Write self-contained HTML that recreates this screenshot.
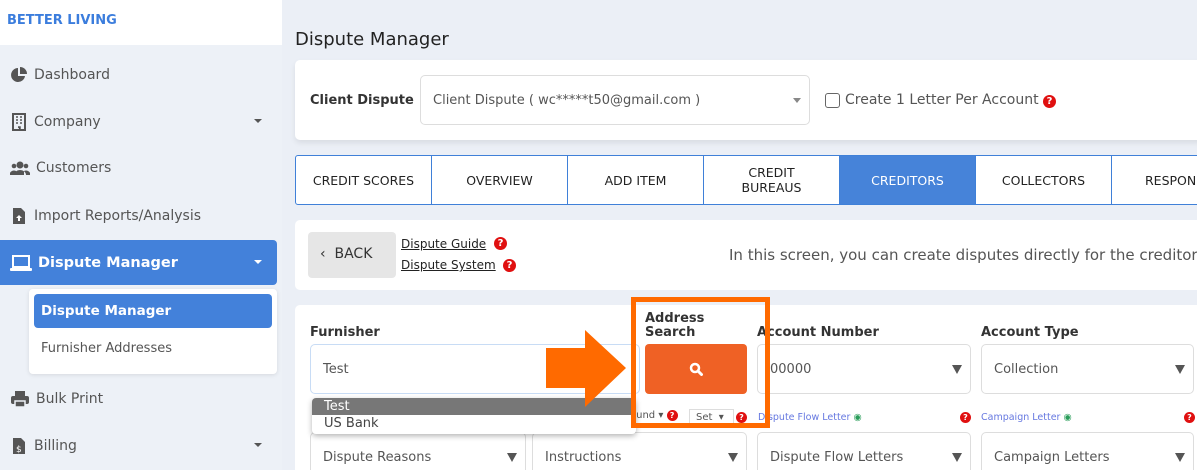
<!DOCTYPE html>
<html style="overflow:hidden;width:1197px;height:470px"><head><meta charset="utf-8"><style>
*{box-sizing:border-box;margin:0;padding:0}
body{width:1197px;height:470px;overflow:hidden;background:#ebeff6;font-family:"DejaVu Sans","Liberation Sans",sans-serif;color:#444;position:relative}
.a{position:absolute}
.side{left:0;top:0;width:282px;height:470px;background:#edf1f7}
.logo{left:0;top:0;width:282px;height:45px;background:#fff;color:#3b7ddd;font-weight:bold;font-size:13px;padding:13px 7px}
.nav{left:10px;font-size:14px;color:#555;display:flex;align-items:center}
.nav svg{margin-right:6px}
.car{width:0;height:0;border-left:4px solid transparent;border-right:4px solid transparent;border-top:4px solid #555}
.card{background:#fff;border-radius:5px}
.box{border:1px solid #ddd;border-radius:5px;background:#fff;font-size:13px;color:#555;display:flex;align-items:center;padding-left:12px}
.tri{position:absolute;right:8px;top:50%;margin-top:-4px;width:0;height:0;border-left:5px solid transparent;border-right:5px solid transparent;border-top:9px solid #555}
.lbl{font-size:13px;font-weight:bold;color:#333}
.q{display:inline-block;width:13px;height:13px;border-radius:50%;background:#e01010;color:#fff;font-size:10px;font-weight:bold;text-align:center;line-height:13px}
.tab{top:155px;height:50px;border:1px solid #3f80d8;border-left:none;background:#fff;font-size:12.5px;color:#222;display:flex;align-items:center;justify-content:center;text-align:center;line-height:15px}
</style></head><body>
<div class="a side"></div>
<div class="a logo">BETTER LIVING</div>
<div class="a nav" style="top:66px"><svg width="18" height="18" viewBox="0 0 18 18"><path d="M8 2a7 7 0 1 0 7 8H8z" fill="#555"/><path d="M10 1v7h7a7 7 0 0 0-7-7z" fill="#555"/></svg>Dashboard</div>
<div class="a nav" style="top:113px"><svg width="18" height="18" viewBox="0 0 18 18"><rect x="3" y="1" width="12" height="16" fill="none" stroke="#555" stroke-width="2"/><path d="M6 4h2M10 4h2M6 7h2M10 7h2M6 10h2M10 10h2M8 14h2v3" stroke="#555" stroke-width="1.5"/></svg>Company</div>
<div class="a car" style="left:254px;top:119px"></div>
<div class="a nav" style="top:160px"><svg width="20" height="16" viewBox="0 0 20 16"><circle cx="10" cy="5" r="3.5" fill="#555"/><circle cx="4" cy="6" r="2.3" fill="#555"/><circle cx="16" cy="6" r="2.3" fill="#555"/><path d="M4 15a6 5 0 0 1 12 0z M0 14a4 3 0 0 1 6-3v4H0z M20 14a4 3 0 0 0-6-3v4h6z" fill="#555"/></svg>Customers</div>
<div class="a nav" style="top:207px"><svg width="18" height="18" viewBox="0 0 18 18"><path d="M3 1h8l4 4v12H3z" fill="#555"/><path d="M9 8l-3 3h2v3h2v-3h2z" fill="#fff"/></svg>Import Reports/Analysis</div>
<div class="a" style="left:0;top:240px;width:277px;height:45px;background:#4381da;border-radius:0 4px 4px 0"></div>
<div class="a nav" style="top:254px;color:#fff;font-size:14.5px;font-weight:bold"><svg width="22" height="18" viewBox="0 0 22 18"><rect x="3" y="2" width="16" height="11" fill="none" stroke="#fff" stroke-width="2"/><rect x="0" y="14" width="22" height="3" rx="1" fill="#fff"/></svg>Dispute Manager</div>
<div class="a car" style="left:254px;top:260px;border-top-color:#fff"></div>
<div class="a" style="left:29px;top:289px;width:248px;height:85px;background:#fff;border-radius:4px;box-shadow:0 1px 4px rgba(0,0,0,.1)"></div>
<div class="a" style="left:34px;top:294px;width:238px;height:34px;background:#4381da;border-radius:4px;color:#fff;font-weight:bold;font-size:13.5px;padding:9px 7px">Dispute Manager</div>
<div class="a" style="left:41px;top:341px;font-size:13px;color:#555">Furnisher Addresses</div>
<div class="a nav" style="top:390px"><svg width="20" height="18" viewBox="0 0 20 18"><rect x="5" y="1" width="10" height="5" fill="#555"/><rect x="1" y="6" width="18" height="8" rx="2" fill="#555"/><rect x="5" y="11" width="10" height="6" fill="#555" stroke="#edf1f7" stroke-width="1.5"/></svg>Bulk Print</div>
<div class="a nav" style="top:437px"><svg width="18" height="18" viewBox="0 0 18 18"><path d="M3 1h8l4 4v12H3z" fill="#555"/><text x="6" y="15" font-size="9" fill="#fff" font-family="DejaVu Sans">$</text></svg>Billing</div>
<div class="a car" style="left:254px;top:443px"></div>

<div class="a" style="left:295px;top:29px;font-size:18px;color:#222">Dispute Manager</div>
<div class="a card" style="left:295px;top:60px;width:910px;height:80px;box-shadow:0 3px 6px rgba(0,0,0,.08)"></div>
<div class="a lbl" style="left:310px;top:93px">Client Dispute</div>
<div class="a box" style="left:420px;top:75px;width:390px;height:50px">Client Dispute ( wc*****t50@gmail.com )<div class="tri" style="border-top-width:5px;border-top-color:#888;border-left-width:4px;border-right-width:4px;margin-top:-2px"></div></div>
<div class="a" style="left:825px;top:93px;width:15px;height:15px;border:1px solid #666;border-radius:3px;background:#fff"></div>
<div class="a" style="left:845px;top:92px;font-size:14px;color:#555">Create 1 Letter Per Account <span class="q">?</span></div>

<div class="a tab" style="left:295px;width:137px;border-left:1px solid #3f80d8;border-radius:3px 0 0 3px">CREDIT SCORES</div>
<div class="a tab" style="left:432px;width:136px">OVERVIEW</div>
<div class="a tab" style="left:568px;width:136px">ADD ITEM</div>
<div class="a tab" style="left:704px;width:136px">CREDIT<br>BUREAUS</div>
<div class="a tab" style="left:840px;width:136px;background:#4683d9;color:#fff">CREDITORS</div>
<div class="a tab" style="left:976px;width:136px">COLLECTORS</div>
<div class="a tab" style="left:1112px;width:136px;justify-content:flex-start;padding-left:33px">RESPONSES</div>

<div class="a card" style="left:295px;top:220px;width:910px;height:70px"></div>
<div class="a" style="left:308px;top:232px;width:88px;height:46px;background:#e6e6e6;border-radius:4px;font-size:14px;color:#333;padding:14px 12px">&#8249;&nbsp; BACK</div>
<div class="a" style="left:401px;top:237px;font-size:12px;color:#222;text-decoration:underline">Dispute Guide</div><div class="a q" style="left:494px;top:237px">?</div>
<div class="a" style="left:401px;top:258px;font-size:12px;color:#222;text-decoration:underline">Dispute System</div><div class="a q" style="left:503px;top:259px">?</div>
<div class="a" style="left:729px;top:246px;font-size:15px;color:#555;white-space:nowrap">In this screen, you can create disputes directly for the creditors</div>

<div class="a card" style="left:295px;top:305px;width:910px;height:170px"></div>
<div class="a lbl" style="left:310px;top:325px">Furnisher</div>
<div class="a lbl" style="left:645px;top:312px;line-height:14px">Address<br>Search</div>
<div class="a lbl" style="left:757px;top:325px">Account Number</div>
<div class="a lbl" style="left:981px;top:325px">Account Type</div>
<div class="a box" style="left:310px;top:344px;width:330px;height:50px;border-color:#c8dcf5">Test</div>
<div class="a" style="left:645px;top:344px;width:102px;height:50px;background:#ef6125;border-radius:4px"><svg class="a" style="left:44px;top:18px" width="14" height="14" viewBox="0 0 14 14"><circle cx="6" cy="6" r="4" fill="none" stroke="#fff" stroke-width="2.5"/><path d="M9 9l3.5 3.5" stroke="#fff" stroke-width="3" stroke-linecap="round"/></svg></div>
<div class="a box" style="left:757px;top:344px;width:214px;height:50px">00000<div class="tri"></div></div>
<div class="a box" style="left:981px;top:344px;width:213px;height:50px">Collection<div class="tri"></div></div>

<div class="a" style="left:630px;top:410px;font-size:10px;color:#555">ound ▾ <span class="q" style="width:11px;height:11px;line-height:11px;font-size:8px">?</span></div>
<div class="a" style="left:689px;top:409px;width:45px;height:17px;border:1px solid #ddd;font-size:10px;padding:2px 6px;color:#555">Set &nbsp;▾</div>
<div class="a q" style="left:736px;top:412px;width:11px;height:11px;line-height:11px;font-size:8px">?</div>
<div class="a" style="left:758px;top:412px;font-size:9.5px;color:#6678e0">Dispute Flow Letter <span style="color:#2a9d5a">◉</span></div>
<div class="a q" style="left:960px;top:412px;width:11px;height:11px;line-height:11px;font-size:8px">?</div>
<div class="a" style="left:981px;top:412px;font-size:9.5px;color:#6678e0">Campaign Letter <span style="color:#2a9d5a">◉</span></div>
<div class="a q" style="left:1184px;top:412px;width:11px;height:11px;line-height:11px;font-size:8px">?</div>

<div class="a box" style="left:310px;top:432px;width:216px;height:50px">Dispute Reasons<div class="tri" style="top:24px"></div></div>
<div class="a box" style="left:532px;top:432px;width:215px;height:50px">Instructions<div class="tri" style="top:24px"></div></div>
<div class="a box" style="left:757px;top:432px;width:214px;height:50px">Dispute Flow Letters<div class="tri" style="top:24px"></div></div>
<div class="a box" style="left:981px;top:432px;width:213px;height:50px">Campaign Letters<div class="tri" style="top:24px"></div></div>

<div class="a" style="left:312px;top:398px;width:324px;height:36px;background:#fff;border-radius:4px;box-shadow:0 2px 6px rgba(0,0,0,.3);overflow:hidden;font-size:13px">
<div style="background:#777;color:#fff;height:17px;padding-left:12px;line-height:18px">Test</div>
<div style="color:#444;height:17px;padding-left:12px;line-height:18px">US Bank</div></div>

<svg class="a" style="left:540px;top:325px" width="100" height="90" viewBox="0 0 100 90"><path d="M6 23H45V5L86 43L45 82V63H6z" fill="#ff6a00"/></svg>
<div class="a" style="left:631px;top:297px;width:139px;height:131px;border:5px solid #ff6a00"></div>
</body></html>
